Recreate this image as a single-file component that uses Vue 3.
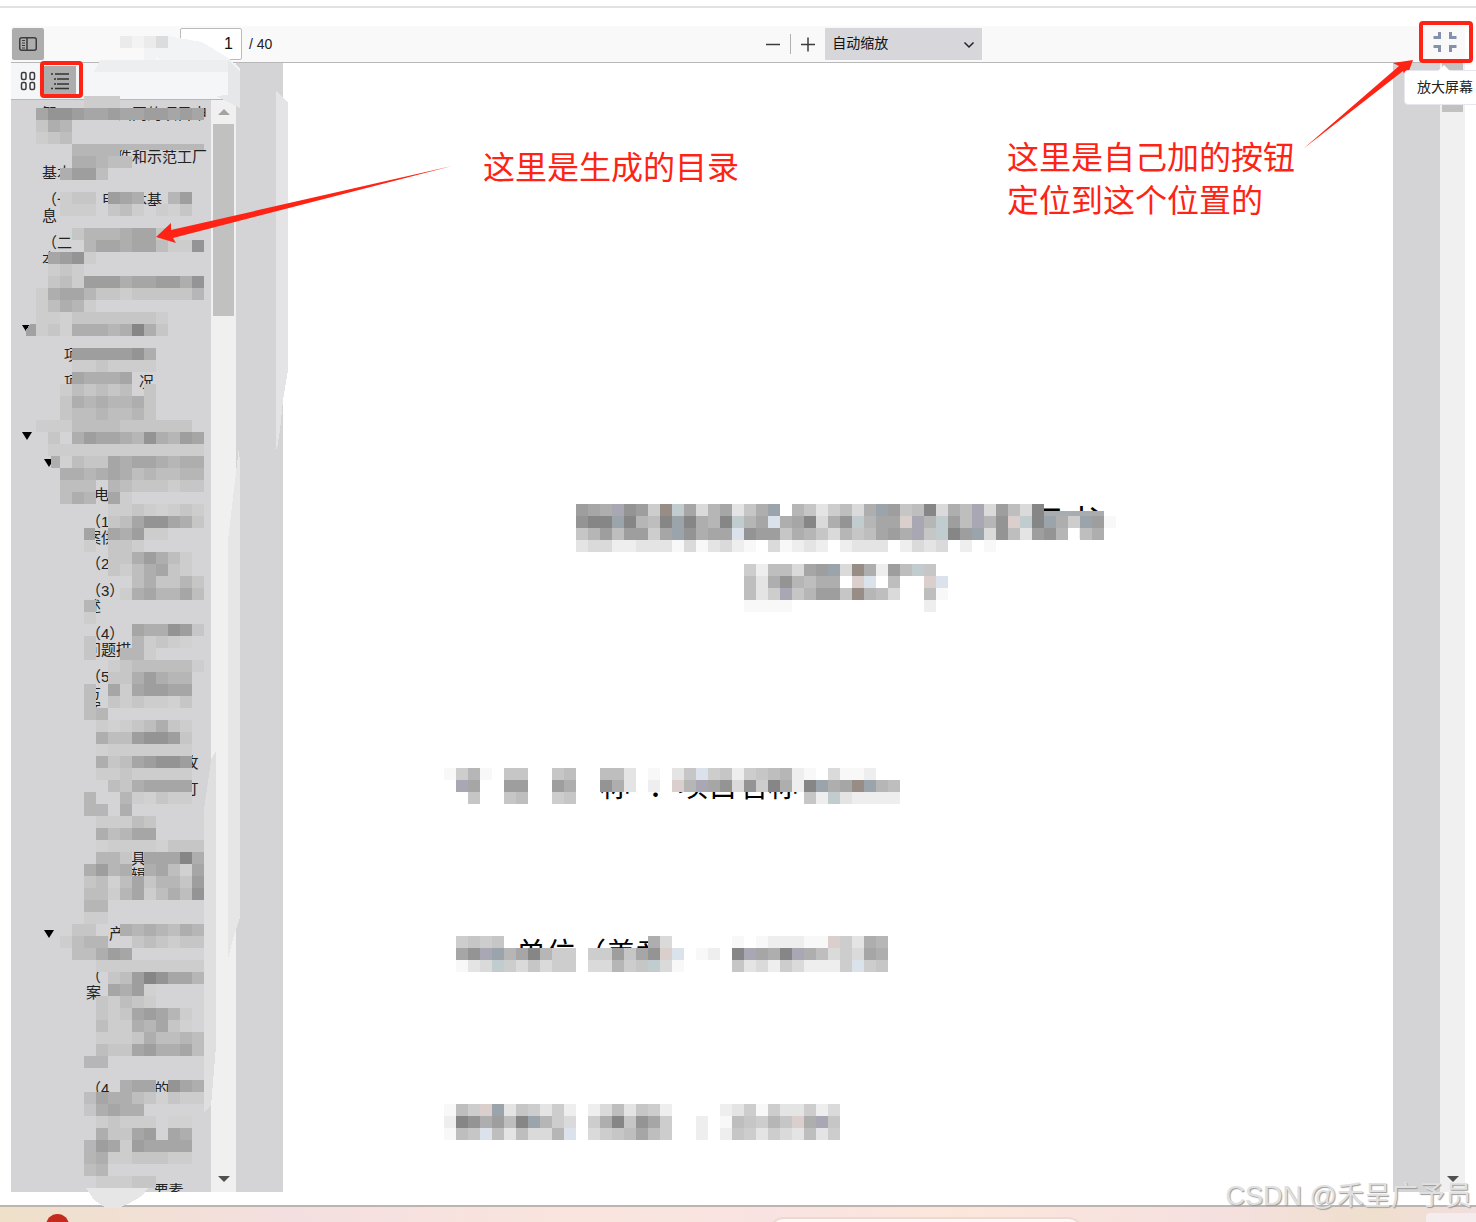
<script setup>
import {ref, computed} from 'vue';

const page = ref('1');
const zoom = ref('auto');

// level: 들여쓰기 단계, open: 펼침 화살표 표시
const outline = [
  {level: 0, lines: ['智　　　　云网的项目申', '']},
  {level: 0, lines: ['　　　　　件和示范工厂', '基本']},
  {level: 0, lines: ['（一　　申　本基', '息']},
  {level: 0, lines: ['（二', '本']},
  {level: 0, lines: ['', '']},
  {level: 0, open: true, lines: ['']},
  {level: 1, lines: ['项']},
  {level: 1, lines: ['项　　　　况']},
  {level: 1, lines: ['']},
  {level: 0, open: true, lines: ['']},
  {level: 1, open: true, lines: ['', '', '　　电']},
  {level: 2, lines: ['（1', '案供']},
  {level: 2, lines: ['（2']},
  {level: 2, lines: ['（3）', '述']},
  {level: 2, lines: ['（4）', '问题描']},
  {level: 2, lines: ['（5', '方', '案']},
  {level: 2, lines: ['']},
  {level: 2, lines: ['　　　　　　\u2002攻']},
  {level: 2, lines: ['　　　　　　\u2002打', '']},
  {level: 2, lines: ['']},
  {level: 2, lines: ['　　　具', '　　　辑', '', '']},
  {level: 1, open: true, lines: ['　　　产', '']},
  {level: 2, lines: ['（', '案']},
  {level: 2, lines: ['']},
  {level: 2, lines: ['', '']},
  {level: 2, lines: ['（4　　　的痛', '']},
  {level: 2, lines: ['', '', '']},
  {level: 2, lines: ['　　　　\u2002要素']},
];

const CELL = 12;

const colors = {
  1: '#868686', 2: '#949494', 3: '#9e9e9e', 4: '#a6a6a7', 5: '#aeaeaf',
  6: '#b6b6b7', 7: '#bebebf', 8: '#c6c6c7', 9: '#cdcdce', d: '#d1d1d2',
  e: '#dadada', f: '#e4e4e4', g: '#eeeeee', h: '#f8f8f8',
  q: '#978c86', r: '#dacfcc', v: '#a9a7b4', b: '#9aa4aa', p: '#c1cccf', s: '#dbe2ec',
};

// [row, col, cells]
const blocks = [
  // sidebar
  [8, 7, '999'], [9, 3, '42234434433434'], [10, 3, '856'], [11, 3, '987'],
  [12, 6, '6666'], [13, 6, '55677'], [14, 5, '5337'],
  [16, 5, '988.345..63'], [17, 5, '999.879.9d8'], [19, 6, '866654489'],
  [20, 7, '6445447992'], [21, 4, '4329'], [22, 4, '989'], [23, 4, '8793335443352'],
  [24, 3, '95446889888886'], [25, 3, '97569'], [26, 3, '99d88888889'], [27, 3, '98d55565158'],
  [29, 6, '3333325'], [30, 6, '9989999'], [31, 6, '45554..'], [32, 5, '978787.8'],
  [33, 5, '85656658'], [34, 5, '87767768'], [35, 3, '9997777888888'],
  [36, 4, '8.53445625634'], [37, 4, '9999999999999'], [38, 5, 'd78845445655'],
  [39, 5, '556545767766'], [40, 5, '777.67888988'], [41, 5, '756.49'],
  [42, 9, '9989d989'], [43, 9, '87422458'], [44, 9, '45399'], [45, 7, '9.889'],
  [46, 9, '8853579'], [47, 9, '8975489'], [48, 11, '758868'], [49, 10, '9546647'],
  [50, 7, '6'], [51, 7, '9'], [52, 11, '455238'], [53, 7, '8...6989d'], [54, 7, '8..669'],
  [55, 9, '98777779'], [56, 9, '8853566'], [57, 7, '7.4943344'], [58, 7, '7.89899d8'],
  [59, 7, '76'], [60, 8, '9d987589'], [61, 8, '57732238'], [62, 8, 'd9999999'],
  [63, 8, '58743223'], [64, 8, '99899999'], [65, 9, '7854444'], [66, 7, '6..69d899'],
  [67, 7, '66.5'], [68, 8, '99978'], [69, 8, '57644'], [70, 8, 'd9999d888'],
  [71, 8, '668.44415'], [72, 7, '5365.547d4'], [73, 7, '87d7486683'], [74, 7, '7796497572'],
  [75, 7, '66'], [76, 7, '99'], [77, 6, '88..5656756'], [78, 5, '9766..878988'],
  [79, 6, '77534'], [80, 8, '999999999'], [81, 9, '87312446'], [82, 9, '453d'],
  [83, 8, '89789'], [84, 8, '89843469'], [85, 8, '7995648d'], [86, 8, '999857767'],
  [87, 8, '788435547'], [88, 7, '66'], [90, 10, '544.245'], [91, 7, '745578d899'],
  [92, 7, '85455'], [93, 8, '98999.dd'], [94, 8, '58843.45'], [95, 7, '634934444'],
  [96, 7, '659988899'], [97, 7, '76'], [98, 8, '99988'],
  // title
  [42, 48, '345v239qp4e64f85b.68f97e5b3871e57ve37e1'],
  [43, 48, '211b1671b1561p64s541e52p644rv6p37v62rp1b59b3h'],
  [44, 48, '86373394b2544s2338568e687435v8p13be27f326.75'],
  [45, 48, 'feeggfffhehfegh.ehgfg.gfff.gefe.g.h'],
  [47, 62, '9g77e43beq5g37p8'], [48, 62, '7f526755.rs.7..rs'], [49, 62, '7f9v86338q67e..7h'], [50, 62, 'hhhh...........g'],
  // fields
  [64, 37, 'h96h.88..87..77f.h.f8s98g9876gh.ehhg'],
  [65, 38, 'v4..33..35..25f.g.r6v42e2915g1b54qb67'],
  [66, 39, '8..87..98'], [66, 67, '8gpfgggg'],
  [78, 38, '9898'], [78, 54, '5e'], [78, 61, 'h.hggghhr9f56'],
  [79, 38, '42vb641699.993842rs.hg.1v451v57e9e45'],
  [80, 38, 'hfep9e8e99.ee698peh'], [80, 61, '8feg9eggg9s98'],
  [92, 37, 'h79rbf89f9g.ge7f89g....gf9h9ff9ge'],
  [93, 37, 'g125371b69e.9518249..g.h78968r5v8'],
  [94, 37, 'h78s7f7ee6s.e987479..g.g89f9ef7f9'],
];

const cells = computed(() => {
  return blocks.flatMap(([row, col, text]) => {
    return [...text]
      .map((key, i) => ({x: (col + i) * CELL, y: row * CELL, fill: colors[key]}))
      .filter((cell) => cell.fill);
  });
});
</script>

<template>
  <div class="app">
    <div class="top-line"></div>

    <div class="viewer">
      <div class="toolbar">
        <div class="toolbar-left">
          <button class="btn-toggle" aria-label="切换侧栏">
            <svg width="20" height="16" viewBox="0 0 20 16" fill="none" stroke="#3c3c3c">
              <rect x="1.75" y="1.75" width="16.5" height="12.5" rx="2" stroke-width="1.5"/>
              <path d="M9 2v12" stroke-width="1.5"/>
              <path d="M4 4.500h3M4 7h3M4 9.500h3M4 12h3"/>
            </svg>
          </button>
          <input v-model="page" class="page-input" aria-label="页码">
          <span class="page-total">/ 40</span>
        </div>
        <div class="toolbar-zoom">
          <button class="btn-zoom" aria-label="缩小">
            <svg width="16" height="16" stroke="#3c3c3c" stroke-width="1.5"><path d="M1 8.500h14"/></svg>
          </button>
          <span class="separator"></span>
          <button class="btn-zoom" aria-label="放大">
            <svg width="16" height="16" stroke="#3c3c3c" stroke-width="1.5"><path d="M1 8.500h14M8 1.500v14"/></svg>
          </button>
          <div class="select-wrap">
            <select v-model="zoom" class="zoom-select" aria-label="缩放">
              <option value="auto">自动缩放</option>
            </select>
            <svg class="chevron" width="12" height="8" fill="none" stroke="#222" stroke-width="1.5"><path d="M1.500 1.500L6 6l4.500-4.500"/></svg>
          </div>
        </div>
        <button class="btn-screen" aria-label="放大屏幕">
          <svg width="24" height="22" fill="none" stroke="#8391ad" stroke-width="3">
            <path d="M0.500 6.500h6V1M23.500 6.500h-6V1M0.500 15.500h6V21M23.500 15.500h-6V21"/>
          </svg>
        </button>
      </div>

      <div class="main">
        <div class="sidebar">
          <div class="sidebar-head">
            <button class="btn-tab" aria-label="缩略图">
              <svg width="16" height="20" fill="none" stroke="#3c3c3c" stroke-width="1.5">
                <rect x="1.500" y="1.500" width="4.500" height="7" rx="1.500"/>
                <rect x="10" y="1.500" width="4.500" height="7" rx="1.500"/>
                <rect x="1.500" y="11.500" width="4.500" height="7" rx="1.500"/>
                <rect x="10" y="11.500" width="4.500" height="7" rx="1.500"/>
              </svg>
            </button>
            <button class="btn-tab active" aria-label="目录">
              <svg width="18" height="18" stroke="#333" stroke-width="1.5">
                <path d="M4 2h14M6 7h12M6 12h12M4 16.500h14"/>
                <path d="M0 2h2M3 7h2M3 12h2M0 16.500h2"/>
              </svg>
            </button>
          </div>
          <div class="sidebar-body">
            <ul class="outline">
              <li v-for="(item, i) in outline" :key="i" :class="['level-' + item.level, {open: item.open}]">
                <span v-for="(line, n) in item.lines" :key="n" class="line">{{ line }}</span>
              </li>
            </ul>
            <div class="scrollbar">
              <span class="arrow-up"></span>
              <span class="thumb"></span>
              <span class="arrow-down"></span>
            </div>
          </div>
        </div>

        <div class="document">
          <div class="paper">
            <h1 class="title">　　　　　　　　　　　　　目书</h1>
            <p class="field spread"><span></span><span></span><span></span><span>称</span><span class="colon">：</span><span class="value">项目名称</span></p>
            <p class="field">　　单位（盖章</p>
          </div>
        </div>
        <div class="scrollbar doc-scrollbar">
          <span class="thumb"></span>
          <span class="arrow-down"></span>
        </div>
      </div>
    </div>

    <div class="taskbar">
      <span class="badge"></span>
      <span class="search"></span>
      <span class="tray"></span>
    </div>

    <svg class="overlay" aria-hidden="true">
      <g shape-rendering="crispEdges">
        <path d="M168 36l34 6 26 16 12 10v4H94l6-12h60l-16-12z" fill="#f2f3f4"/>
        <path d="M100 60h128l12 12H94z" fill="#eceef0"/>
        <path d="M228 60l12 12v36l-24-12 12-1z" fill="#e6e7e8"/>
        <path d="M120 36h12v12h-12zM144 36h12v12h-12z" fill="#ebebeb"/>
        <path d="M132 36h12v12h-12zM144 48h12v12h-12z" fill="#f3f3f3"/>
        <path d="M156 36h12v12h-12z" fill="#dcdcdc"/>
        <path d="M276 90l12 13v267l-5 30-3 30-3 19h-1z" fill="#e4e4e6"/>
        <path d="M239 447l1 20v450l-7 22-5 20V540z" fill="#e6e6e6"/>
        <path d="M216 751v295l-5 60-7 6V810l7-50z" fill="#dfdfe0"/>
        <path d="M120 144h84v6h-84z" fill="#b8b8b9"/>
        <path d="M30 324h6v12H26v-6z" fill="#a1a1a1"/>
        <path d="M51 456h9v12h-9z" fill="#aeaeaf"/>
        <path d="M84 528h11v12H84z" fill="#a4a4a4"/>
        <path d="M1043 511h61v5h-61z" fill="#a9acae"/>
        <path d="M86 1188h62l-6 8-14 8-10 4h-12l-12-8z" fill="#e6e6e6"/>
        <rect v-for="(cell, i) in cells" :key="i" :x="cell.x" :y="cell.y" width="12" height="12" :fill="cell.fill"/>
      </g>
      <g fill="#fe2314">
        <path d="M452 166L171 230v-7l-15 14 20 6-3-5z"/>
        <path d="M1303 149l96-83-6-3 20-3-7 19-3-8z"/>
      </g>
      <g fill="none" stroke="#fe2314" stroke-width="4">
        <rect x="42" y="63" width="39" height="33" rx="2"/>
        <rect x="1421" y="23" width="50" height="38" rx="2"/>
      </g>
    </svg>

    <div class="tooltip">放大屏幕</div>
    <p class="note note-outline">这里是生成的目录</p>
    <p class="note note-button">这里是自己加的按钮<br>定位到这个位置的</p>
    <span class="watermark">CSDN @禾呈广予员</span>
  </div>
</template>

<style>
body {
  margin: 0;
  background: #fff;
}
</style>

<style scoped>
.app {
  position: relative;
  display: flex;
  flex-direction: column;
  height: 100vh;
  overflow: hidden;
  box-sizing: border-box;
  padding-top: 6px;
  font-family: "Liberation Sans", "Noto Sans CJK SC", sans-serif;
  font-size: 14px;
  color: #222;
}

button {
  display: flex;
  align-items: center;
  justify-content: center;
  padding: 0;
  border: none;
  background: none;
}

.top-line {
  flex: none;
  height: 2px;
  background: #e2e2e2;
}

.viewer {
  flex: 1;
  min-height: 0;
  display: flex;
  flex-direction: column;
  margin: 18px 11px 13px;
}

.toolbar {
  flex: none;
  display: flex;
  align-items: center;
  height: 36px;
  background: #f9f9fa;
  border-bottom: 1px solid #b8b8b8;
}

.toolbar-left {
  display: flex;
  align-items: center;
  flex: 0 0 51.6%;
}

.btn-toggle {
  width: 32px;
  height: 32px;
  margin-left: 1px;
  border-radius: 2px;
  background: #adadad;
}

.page-input {
  width: 62px;
  height: 32px;
  box-sizing: border-box;
  margin-left: 136px;
  padding: 0 8px;
  border: 1px solid #bbbbbc;
  border-radius: 2px;
  background: #fff;
  font: 16px "Liberation Sans", sans-serif;
  text-align: right;
  color: #111;
}

.page-total {
  margin-left: 7px;
}

.toolbar-zoom {
  display: flex;
  align-items: center;
  gap: 5px;
}

.btn-zoom {
  width: 24px;
  height: 32px;
}

.separator {
  width: 1px;
  height: 20px;
  background: #b0b0b0;
}

.select-wrap {
  position: relative;
}

.zoom-select {
  display: block;
  appearance: none;
  width: 157px;
  height: 32px;
  padding: 0 7px 2px;
  border: none;
  border-radius: 0;
  background: #d7d7db;
  font: 14px "Liberation Sans", "Noto Sans CJK SC", sans-serif;
  color: #111;
}

.chevron {
  position: absolute;
  right: 7px;
  top: 13px;
}

.btn-screen {
  margin-left: auto;
  margin-right: 8px;
  padding-bottom: 4px;
  width: 24px;
  height: 32px;
}

.main {
  flex: 1;
  min-height: 0;
  display: flex;
  background: #d4d4d6;
}

.sidebar {
  flex: 0 0 225px;
  display: flex;
  flex-direction: column;
}

.sidebar-head {
  flex: none;
  display: flex;
  align-items: center;
  height: 36px;
  padding-left: 1px;
  background: #f5f6f8;
  border-bottom: 1px solid #b8b8b8;
}

.btn-tab {
  width: 32px;
  height: 30px;
}

.btn-tab.active {
  background: #adadad;
}

.sidebar-body {
  flex: 1;
  min-height: 0;
  display: flex;
}

.outline {
  flex: 1;
  min-width: 0;
  margin: 0;
  padding: 6px 0 0;
  overflow: hidden;
  list-style: none;
  font-size: 15px;
}

.outline li {
  position: relative;
  margin-bottom: 11px;
  padding-left: 31px;
}

.outline li:nth-child(6n) {
  margin-bottom: 10px;
}

.outline .level-1 {
  padding-left: 53px;
}

.outline .level-2 {
  padding-left: 75px;
}

.outline .open::before {
  content: "";
  position: absolute;
  top: 4px;
  left: 11px;
  border: 5px solid transparent;
  border-top: 8px solid #000;
  border-bottom: none;
}

.outline .level-1.open::before {
  left: 33px;
}

.line {
  display: block;
  height: 16px;
  line-height: 16px;
  white-space: pre;
}

.scrollbar {
  flex: 0 0 25px;
  display: flex;
  flex-direction: column;
  align-items: center;
  background: #f0f0f0;
}

.arrow-up {
  margin: 9px 0;
  border: 6px solid transparent;
  border-bottom: 6px solid #a3a3a3;
  border-top: none;
}

.thumb {
  width: 21px;
  height: 192px;
  background: #c1c1c1;
}

.arrow-down {
  margin: auto 0 10px;
  border: 6px solid transparent;
  border-top: 6px solid #505050;
  border-bottom: none;
}

.doc-scrollbar .thumb {
  height: 49px;
}

.document {
  flex: 1;
  min-width: 0;
  padding: 0 47px;
  overflow: hidden;
}

.paper {
  height: 100%;
  box-sizing: border-box;
  padding-top: 437px;
  background: #fff;
  color: #000;
}

.title {
  margin: 0 0 214px;
  font-size: 35px;
  font-weight: 400;
  line-height: 48px;
  text-align: center;
  white-space: pre;
}

.field {
  margin: 0 0 120px;
  padding-left: 173px;
  font-size: 30px;
  line-height: 48px;
  white-space: pre;
}

.spread {
  display: flex;
  gap: 18px;
}

.spread span {
  flex: 0 0 30px;
}

.spread .colon {
  flex-basis: 12px;
  min-width: 0;
}

.spread .value {
  flex: none;
}

.taskbar {
  position: relative;
  flex: none;
  height: 15px;
  border-top: 2px solid #bdb3b0;
  overflow: hidden;
  background: linear-gradient(90deg, #eee0c9 0, #f4dfe0 20%, #f9e5dd 40%, #f8e3e2 52%, #fbe7da 65%, #f5e0e0 82%, #efdfcd 93%, #f1dede 100%);
}

.badge {
  position: absolute;
  left: 46px;
  top: 7px;
  width: 23px;
  height: 23px;
  border-radius: 50%;
  background: #c52a1c;
}

.search {
  position: absolute;
  left: 52%;
  top: 10px;
  width: 312px;
  height: 32px;
  border: 2px solid #ecd9d3;
  border-radius: 16px;
  background: #fdf8f6;
}

.tray {
  position: absolute;
  right: 0;
  top: 6px;
  width: 50px;
  height: 32px;
  border-radius: 4px 0 0 0;
  background: #f4eced;
}

.overlay {
  position: absolute;
  left: 0;
  top: 0;
  width: 100%;
  height: 100%;
  pointer-events: none;
}

.tooltip {
  position: absolute;
  right: -14px;
  top: 70px;
  padding: 0 16px 0 12px;
  border: 1px solid #e4e7ed;
  border-radius: 4px;
  background: #fff;
  line-height: 33px;
  white-space: nowrap;
}

.tooltip::before {
  content: "";
  position: absolute;
  left: 33px;
  top: -6px;
  border: 6px solid transparent;
  border-bottom-color: #fff;
  border-top: none;
}

.note {
  position: absolute;
  margin: 0;
  font-size: 32px;
  line-height: 43px;
  color: #fe2314;
  white-space: nowrap;
}

.note-outline {
  left: 483px;
  top: 147px;
}

.note-button {
  right: 181px;
  top: 137px;
}

.watermark {
  position: absolute;
  right: 4px;
  bottom: 8px;
  font-size: 27px;
  line-height: 36px;
  color: #e0e0e0;
  text-shadow: 1px 1px 1px #999;
}
</style>
